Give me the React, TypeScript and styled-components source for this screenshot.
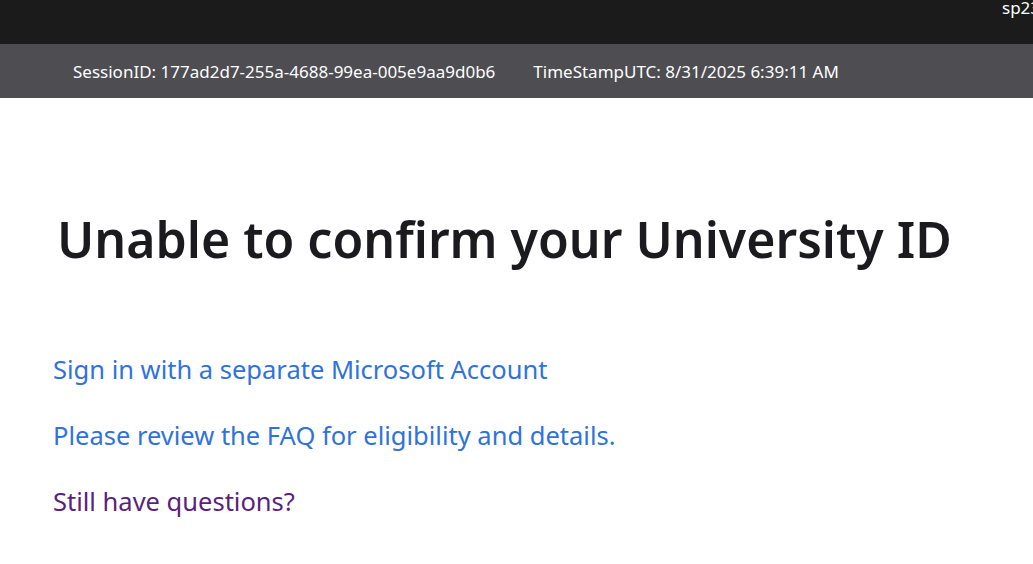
import styled, { createGlobalStyle } from "styled-components";

const GlobalStyle = createGlobalStyle`
  html, body {
    margin: 0;
    padding: 0;
    background: #ffffff;
    font-family: "Segoe UI", "Noto Sans", "Open Sans", sans-serif;
  }
`;

const TopBar = styled.header`
  display: flex;
  justify-content: flex-end;
  height: 44px;
  background-color: #1b1b1b;
  overflow: hidden;
`;

const UserName = styled.div`
  width: 31px;
  overflow: hidden;
  white-space: nowrap;
  color: #ffffff;
  font-size: 17px;
  line-height: 20px;
  margin-top: -2px;
`;

const SessionBar = styled.div`
  display: flex;
  align-items: center;
  gap: 38px;
  height: 54px;
  padding-left: 73px;
  background-color: #4d4d52;
  color: #ffffff;
  font-size: 17px;
`;

const Main = styled.main`
  display: flex;
  flex-direction: column;
  padding: 106px 0 0 53px;
`;

const Title = styled.h1`
  margin: 0 0 78px 4px;
  font-size: 50px;
  font-weight: 600;
  line-height: 70px;
  color: #1b1b1f;
`;

const LinkList = styled.div`
  display: flex;
  flex-direction: column;
  gap: 32px;
`;

const Link = styled.a<{ $visited?: boolean }>`
  font-size: 25.5px;
  line-height: 34px;
  text-decoration: none;
  color: ${(props) => (props.$visited ? "#5b1f7d" : "#2f72dc")};
`;

const App = () => {
  return (
    <>
      <GlobalStyle />
      <TopBar>
        <UserName>sp23student@university.edu</UserName>
      </TopBar>
      <SessionBar>
        <span>SessionID: 177ad2d7-255a-4688-99ea-005e9aa9d0b6</span>
        <span>TimeStampUTC: 8/31/2025 6:39:11 AM</span>
      </SessionBar>
      <Main>
        <Title>Unable to confirm your University ID</Title>
        <LinkList>
          <Link href="#">Sign in with a separate Microsoft Account</Link>
          <Link href="#">Please review the FAQ for eligibility and details.</Link>
          <Link href="#" $visited>
            Still have questions?
          </Link>
        </LinkList>
      </Main>
    </>
  );
};

export default App;
